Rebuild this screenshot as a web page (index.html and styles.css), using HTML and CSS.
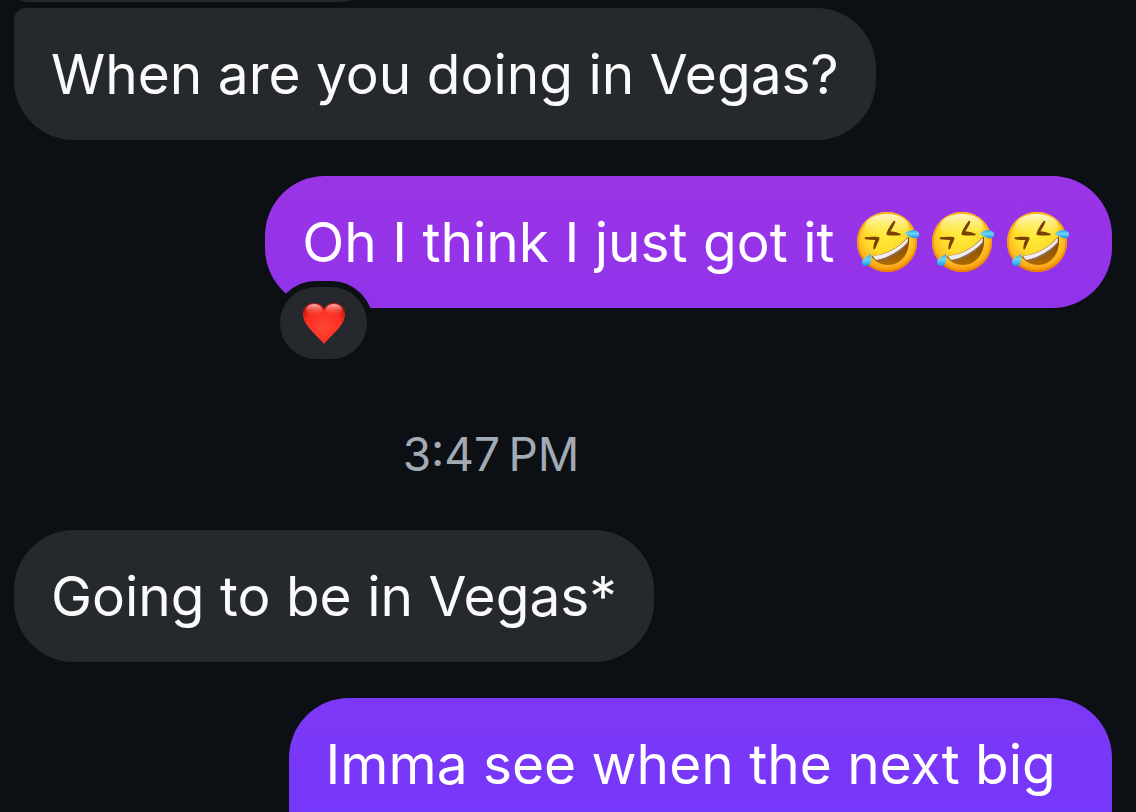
FILE: index.html
```html
<!DOCTYPE html>
<html lang="en">
<head>
    <meta charset="UTF-8">
    <meta name="viewport" content="width=device-width, initial-scale=1.0">
    <title>Messages</title>
    <link rel="stylesheet" href="styles.css">
</head>
<body>
    <!-- Shared emoji artwork -->
    <svg class="sprite" aria-hidden="true">
        <defs>
            <radialGradient id="faceFill" cx="0.48" cy="0.35" r="0.68">
                <stop offset="0" stop-color="#ffec3a"/>
                <stop offset="0.5" stop-color="#ffdc2c"/>
                <stop offset="0.8" stop-color="#fcb21e"/>
                <stop offset="1" stop-color="#ea8400"/>
            </radialGradient>
            <linearGradient id="faceShine" x1="0" y1="0" x2="0" y2="1">
                <stop offset="0" stop-color="#fffbe0" stop-opacity="0.9"/>
                <stop offset="1" stop-color="#fff36a" stop-opacity="0"/>
            </linearGradient>
            <linearGradient id="faceEdge" x1="0" y1="0" x2="0" y2="1">
                <stop offset="0" stop-color="#ffa812"/>
                <stop offset="1" stop-color="#e97c00"/>
            </linearGradient>
            <linearGradient id="mouthFill" x1="0" y1="0" x2="0" y2="1">
                <stop offset="0" stop-color="#7d4100"/>
                <stop offset="1" stop-color="#ad6a05"/>
            </linearGradient>
            <linearGradient id="tearFill" x1="0" y1="0" x2="0" y2="1">
                <stop offset="0" stop-color="#2ea6e6"/>
                <stop offset="0.45" stop-color="#6fd4fa"/>
                <stop offset="1" stop-color="#1597e0"/>
            </linearGradient>
            <radialGradient id="heartFill" cx="0.5" cy="0.6" r="0.64">
                <stop offset="0" stop-color="#ff4632"/>
                <stop offset="0.7" stop-color="#fb2d22"/>
                <stop offset="1" stop-color="#c4150c"/>
            </radialGradient>
            <linearGradient id="heartShine" x1="0" y1="0" x2="0" y2="1">
                <stop offset="0" stop-color="#ffc9c4" stop-opacity="0.9"/>
                <stop offset="1" stop-color="#ff4b3c" stop-opacity="0"/>
            </linearGradient>
        </defs>
        <symbol id="rofl" viewBox="-3 30 225 192">
            <circle cx="108" cy="126" r="90" fill="url(#faceFill)"/>
            <circle cx="108" cy="126" r="87" fill="none" stroke="url(#faceEdge)" stroke-width="6" opacity="0.75"/>
            <ellipse cx="107" cy="77" rx="65" ry="35" fill="url(#faceShine)"/>
            <path d="M42 112C55 110 70 110 82 111Q87 112 85 118L72 147Q68 151 67 145C67 137 69 128 73 120Q58 120 43 118Q39 115 42 112Z" fill="#7a4000"/>
            <path d="M129 62Q135 62 132 69C128 78 123 87 118 94Q134 95 148 101Q152 104 147 106Q129 107 110 106Q104 104 107 98C113 83 120 72 129 62Z" fill="#7a4000"/>
            <path d="M64 168C106 164 144 142 170 112Q174 109 174 115C176 144 166 170 144 185C119 201 84 197 65 174Q60 168 64 168Z" fill="url(#mouthFill)"/>
            <path d="M66 168C107 164 145 142 170 113Q172 119 169 128C148 152 112 173 78 180Q70 177 66 168Z" fill="#eeecf2"/>
            <path d="M78 180C112 173 148 152 169 128L167 134C147 159 112 179 82 184Z" fill="#8f6b55"/>
            <path d="M60 161C63 178 61 196 47 198C33 199 29 185 37 177C43 171 52 168 60 161Z" fill="url(#tearFill)"/>
            <path d="M161 101C171 94 184 87 196 92C208 96 207 111 195 114C182 117 174 108 161 101Z" fill="url(#tearFill)"/>
        </symbol>
        <symbol id="heart" viewBox="0 0 42 42">
            <path d="M21 42C18 38 12 33 7 27C3 22 0 18 0 12C0 5 5 1 11 1C16 1 20 4 21 8C22 4 26 1 31 1C37 1 42 5 42 12C42 18 39 22 35 27C30 33 24 38 21 42Z" fill="url(#heartFill)"/>
            <ellipse cx="11" cy="8" rx="8" ry="6" fill="url(#heartShine)"/>
            <ellipse cx="31" cy="8" rx="8" ry="6" fill="url(#heartShine)"/>
        </symbol>
    </svg>

    <main class="thread">
        <div class="bubble received group-start"></div>
        <div class="bubble received group-end">When are you doing in Vegas?</div>

        <div class="bubble sent">
            <span class="message-text">Oh I think I just got it </span>
            <svg class="emoji" role="img" aria-label="🤣"><use href="#rofl"/></svg>
            <svg class="emoji" role="img" aria-label="🤣"><use href="#rofl"/></svg>
            <svg class="emoji" role="img" aria-label="🤣"><use href="#rofl"/></svg>
            <button class="reaction" type="button" aria-label="❤️">
                <svg class="heart"><use href="#heart"/></svg>
            </button>
        </div>

        <time class="timestamp" datetime="15:47">3:47&#8239;PM</time>

        <div class="bubble received">Going to be in Vegas*</div>
        <div class="bubble sent long">Imma see when the next big</div>
    </main>
</body>
</html>
```
FILE: styles.css
```css
* {
    box-sizing: border-box;
}
body {
    margin: 0;
    background-color: #0c1014;
    color: #fafafa;
    font-family: Inter, "Liberation Sans", sans-serif;
}
.sprite {
    position: absolute;
    width: 0;
    height: 0;
}
.thread {
    display: flex;
    flex-direction: column;
    align-items: flex-start;
    gap: 36px;
    height: 100vh;
    padding: 0 24px 0 14px;
    overflow: hidden;
}
.bubble {
    flex-shrink: 0;
    min-height: 132px;
    padding: 30px 37px;
    border-radius: 60px;
    font-size: 55px;
    line-height: 72px;
}
.received {
    background-color: #25282d;
}
.sent {
    position: relative;
    display: flex;
    align-self: flex-end;
    /* One gradient runs down the whole window behind every sent bubble */
    background: linear-gradient(#a434df 0, #9a34e6 176px, #9133ea 308px, #7d38f5 698px, #7537fa 812px) fixed;
    color: #fff;
}
/* Scrolled past the top, only its bottom edge shows */
.group-start {
    width: 35%;
    margin-top: -130px;
    border-bottom-left-radius: 12px;
}
.group-end {
    margin-top: -30px;
    border-top-left-radius: 12px;
}
.long {
    width: 75%;
    min-height: 204px;
}
.message-text {
    white-space: pre;
}
.emoji {
    width: 75px;
    height: 64px;
    margin-top: 4px;
}
.reaction {
    position: absolute;
    left: 9px;
    bottom: -57px;
    display: flex;
    align-items: center;
    justify-content: center;
    width: 99px;
    height: 84px;
    padding: 0;
    border: 6px solid #0c1014;
    border-radius: 42px;
    background-color: #25282d;
    cursor: pointer;
}
.heart {
    width: 42px;
    height: 42px;
}
.timestamp {
    align-self: stretch;
    margin: 82px 0 12px;
    padding-right: 144px;
    color: #a2aab4;
    font-size: 46px;
    line-height: 56px;
    text-align: center;
}
```
